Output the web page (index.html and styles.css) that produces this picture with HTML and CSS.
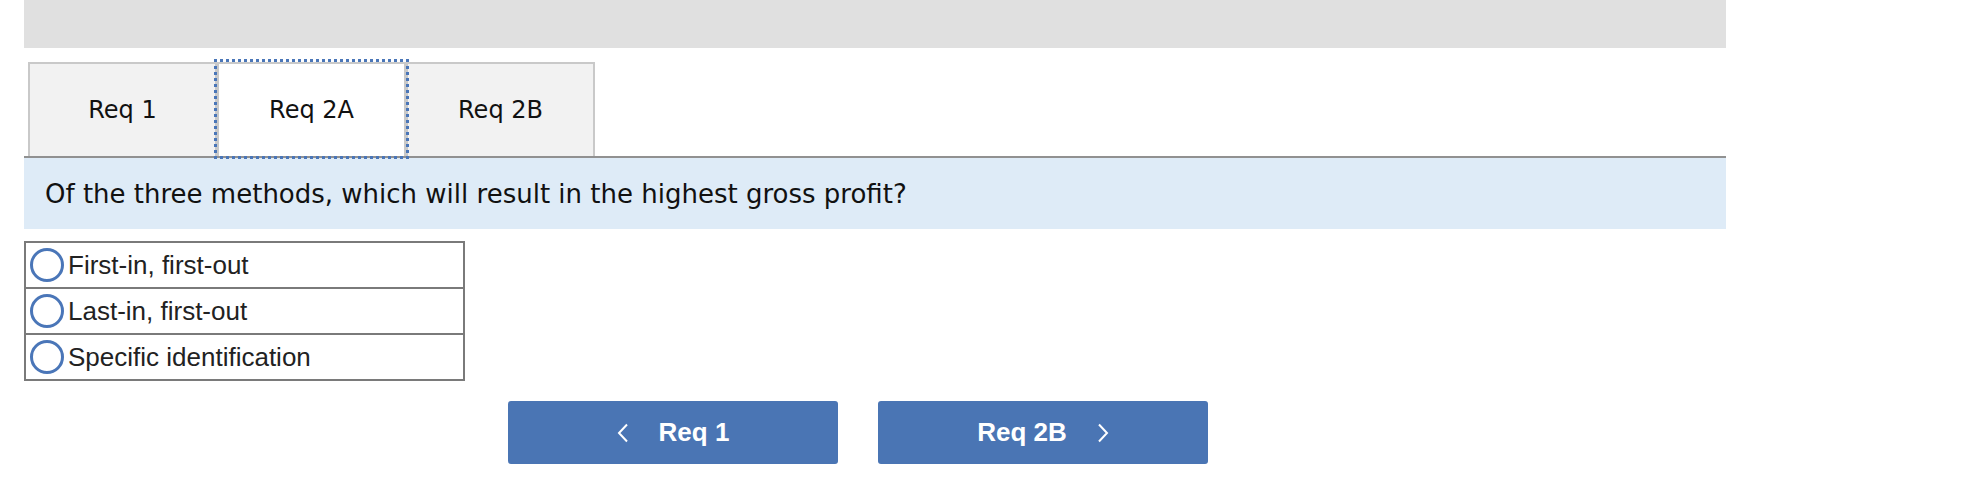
FILE: index.html
```html
<!DOCTYPE html>
<html lang="en">
<head>
    <meta charset="UTF-8">
    <title>Req 2A</title>
    <link rel="stylesheet" href="styles.css">
</head>
<body>
    <div class="wrap">
        <div class="top-bar"></div>

        <div class="tabs">
            <div class="tab">Req 1</div>
            <div class="tab active">Req 2A</div>
            <div class="tab">Req 2B</div>
        </div>

        <div class="question">Of the three methods, which will result in the highest gross profit?</div>

        <div class="options">
            <label class="option"><span class="radio"></span>First-in, first-out</label>
            <label class="option"><span class="radio"></span>Last-in, first-out</label>
            <label class="option"><span class="radio"></span>Specific identification</label>
        </div>

        <div class="nav">
            <a class="nav-btn" href="#">
                <svg class="chev" width="12" height="20" viewBox="0 0 12 20"><polyline points="10,1.5 2,10 10,18.5" fill="none" stroke="#fff" stroke-width="2"/></svg>
                Req 1
            </a>
            <a class="nav-btn" href="#">
                Req 2B
                <svg class="chev right" width="12" height="20" viewBox="0 0 12 20"><polyline points="2,1.5 10,10 2,18.5" fill="none" stroke="#fff" stroke-width="2"/></svg>
            </a>
        </div>
    </div>
</body>
</html>
```

FILE: styles.css
```css
body {
    margin: 0;
    background: #fff;
    font-family: "DejaVu Sans", Verdana, sans-serif;
    color: #111;
}

.wrap {
    margin-left: 24px;
    width: 1702px;
}

.top-bar {
    height: 48px;
    background: #e0e0e0;
}

.tabs {
    display: flex;
    margin-top: 14px;
    padding-left: 4px;
    border-bottom: 2px solid #919191;
}

.tab {
    width: 185px;
    height: 92px;
    display: flex;
    align-items: center;
    justify-content: center;
    background: #f2f2f2;
    border: 2px solid #c9c9c9;
    border-bottom: none;
    font-size: 24px;
}

.tab.active {
    background: #fff;
    outline: 3px dotted #4a76b8;
    position: relative;
    z-index: 1;
}

.question {
    height: 71px;
    display: flex;
    align-items: center;
    padding-left: 21px;
    background: #deebf7;
    font-size: 26px;
}

.options {
    margin-top: 12px;
    width: 441px;
    font-family: "Liberation Sans", Arial, sans-serif;
    font-size: 26px;
    color: #222;
}

.option {
    box-sizing: border-box;
    height: 46px;
    display: flex;
    align-items: center;
    gap: 4px;
    padding-left: 4px;
    border: 2px solid #7a7a7a;
    border-bottom: none;
}

.option:last-child {
    height: 48px;
    border-bottom: 2px solid #7a7a7a;
}

.radio {
    box-sizing: border-box;
    width: 34px;
    height: 34px;
    border: 3.5px solid #4a76b8;
    border-radius: 50%;
    flex: none;
}

.nav {
    display: flex;
    gap: 40px;
    margin-top: 20px;
    padding-left: 484px;
}

.nav-btn {
    width: 330px;
    height: 63px;
    display: flex;
    align-items: center;
    justify-content: center;
    background: #4a75b4;
    border-radius: 3px;
    color: #fff;
    text-decoration: none;
    font-family: "Liberation Sans", Arial, sans-serif;
    font-weight: bold;
    font-size: 26px;
}

.chev {
    margin-right: 30px;
}

.chev.right {
    margin: 0 0 0 30px;
}
```
